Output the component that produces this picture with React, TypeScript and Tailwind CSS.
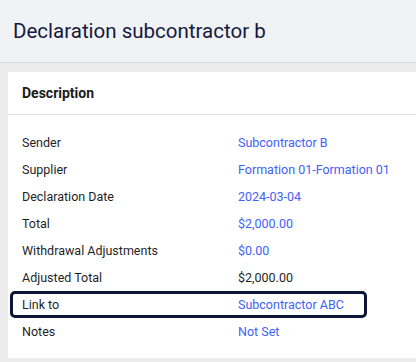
import React from "react";

const rows: { label: string; value: string; link: boolean; active?: boolean }[] = [
  { label: "Sender", value: "Subcontractor B", link: true },
  { label: "Supplier", value: "Formation 01-Formation 01", link: true },
  { label: "Declaration Date", value: "2024-03-04", link: true },
  { label: "Total", value: "$2,000.00", link: true },
  { label: "Withdrawal Adjustments", value: "$0.00", link: true },
  { label: "Adjusted Total", value: "$2,000.00", link: false },
  { label: "Link to", value: "Subcontractor ABC", link: true, active: true },
  { label: "Notes", value: "Not Set", link: true },
];

export default function App() {
  return (
    <div
      className="w-[416px] h-[362px] overflow-hidden bg-[#ececec]"
      style={{ fontFamily: "Roboto, 'Liberation Sans', sans-serif" }}
    >
      <div className="h-[63px] bg-[#f1f2f6] border-b border-[#dadbdf] flex items-center pl-[13px]">
        <h1 className="text-[20.5px] text-[#141a3c] font-normal leading-none">
          Declaration subcontractor b
        </h1>
      </div>
      <div className="pt-[9px] pl-2">
        <div className="bg-white h-[286px]">
          <div className="h-[43px] border-b border-[#e2e2e2] flex items-center pl-[14px]">
            <span className="text-[14px] font-bold text-[#1a1a1a]">Description</span>
          </div>
          <div className="pt-[14px] pl-[2px] flex flex-col">
            {rows.map((r) => (
              <div
                key={r.label}
                className={
                  "w-[357px] h-[27px] flex items-center pl-[9px] pt-[2px] border-[3px] rounded-[5px] text-[12.5px] whitespace-nowrap " +
                  (r.active ? "border-[#0e1635]" : "border-transparent")
                }
              >
                <span className="w-[216px] shrink-0 text-[#1f1f1f]">{r.label}</span>
                <span className={r.link ? "text-[#4062fb]" : "text-[#1f1f1f]"}>{r.value}</span>
              </div>
            ))}
          </div>
        </div>
      </div>
    </div>
  );
}
